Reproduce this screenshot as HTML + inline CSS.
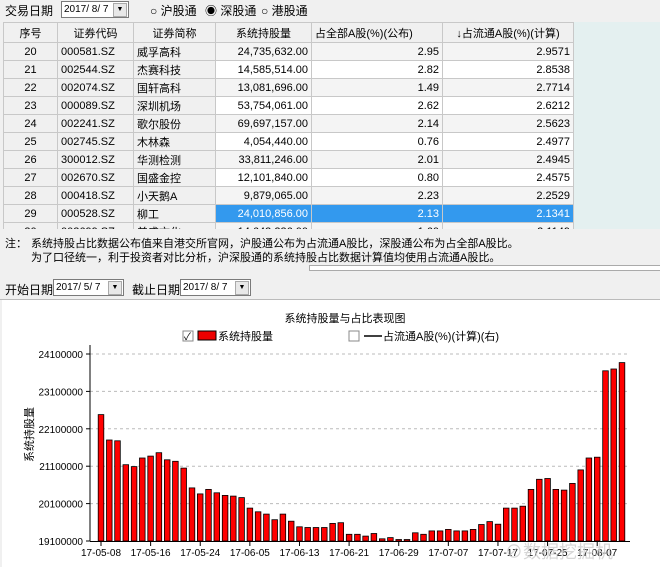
<!DOCTYPE html><html><head><meta charset="utf-8"><style>
body{margin:0;width:660px;height:567px;background:#f0f0f0;font-family:"Liberation Sans","Noto Sans CJK SC",sans-serif;font-size:11px;color:#000;position:relative;overflow:hidden}
.a{position:absolute;white-space:nowrap}
.dd{position:absolute;background:#fff;border:1px solid #7a7a7a;height:17px;font-size:10px;line-height:15px;padding-left:2px;box-sizing:border-box;overflow:hidden}
.dd b{position:absolute;right:1px;top:1px;width:12px;height:12px;background:#e8e8e8;border:1px solid #aaa;font-size:7px;line-height:12px;text-align:center;font-weight:normal}
table{position:absolute;left:3px;top:22px;border-collapse:collapse;table-layout:fixed}
td{height:17px;border:1px solid #c8c8c8;padding:0 3px;font-size:11px;overflow:hidden;white-space:nowrap}
td.c{text-align:center}td.r{text-align:right}
tr.h td{height:19px;text-align:center;background:#f0f0f0}
tr td:nth-child(-n+3){background:#f0f0f0}
tr.w td{background:#fff}tr.g td{background:#f4f4f4}
tr.w td:nth-child(-n+3),tr.g td:nth-child(-n+3){background:#f0f0f0}
tr.s td:nth-child(n+4){background:#3399ee;color:#fff}
</style></head><body>
<div class="a" style="left:5px;top:2px;font-size:12px">交易日期</div>
<div class="dd" style="left:61px;top:1px;width:68px">2017/ 8/ 7<b>▼</b></div>
<div class="a" style="left:150px;top:2px;font-size:12px">○ 沪股通</div>
<div class="a" style="left:205px;top:2px;font-size:12px">◉ 深股通</div>
<div class="a" style="left:261px;top:2px;font-size:12px">○ 港股通</div>
<div class="a" style="left:573px;top:22px;width:87px;height:207px;background:#e4f0f0"></div>
<div class="a" style="left:0;top:22px;width:660px;height:207px;overflow:hidden">
<table style="left:3px;top:0">
<colgroup><col style="width:54px"><col style="width:76px"><col style="width:82px"><col style="width:96px"><col style="width:131px"><col style="width:131px"></colgroup>
<tr class="h"><td>序号</td><td>证券代码</td><td>证券简称</td><td>系统持股量</td><td style="text-align:left">占全部A股(%)(公布)</td><td>↓占流通A股(%)(计算)</td></tr>
<tr class="g"><td class="c">20</td><td>000581.SZ</td><td>威孚高科</td><td class="r">24,735,632.00</td><td class="r">2.95</td><td class="r">2.9571</td></tr>
<tr class="w"><td class="c">21</td><td>002544.SZ</td><td>杰赛科技</td><td class="r">14,585,514.00</td><td class="r">2.82</td><td class="r">2.8538</td></tr>
<tr class="g"><td class="c">22</td><td>002074.SZ</td><td>国轩高科</td><td class="r">13,081,696.00</td><td class="r">1.49</td><td class="r">2.7714</td></tr>
<tr class="w"><td class="c">23</td><td>000089.SZ</td><td>深圳机场</td><td class="r">53,754,061.00</td><td class="r">2.62</td><td class="r">2.6212</td></tr>
<tr class="g"><td class="c">24</td><td>002241.SZ</td><td>歌尔股份</td><td class="r">69,697,157.00</td><td class="r">2.14</td><td class="r">2.5623</td></tr>
<tr class="w"><td class="c">25</td><td>002745.SZ</td><td>木林森</td><td class="r">4,054,440.00</td><td class="r">0.76</td><td class="r">2.4977</td></tr>
<tr class="g"><td class="c">26</td><td>300012.SZ</td><td>华测检测</td><td class="r">33,811,246.00</td><td class="r">2.01</td><td class="r">2.4945</td></tr>
<tr class="w"><td class="c">27</td><td>002670.SZ</td><td>国盛金控</td><td class="r">12,101,840.00</td><td class="r">0.80</td><td class="r">2.4575</td></tr>
<tr class="g"><td class="c">28</td><td>000418.SZ</td><td>小天鹅A</td><td class="r">9,879,065.00</td><td class="r">2.23</td><td class="r">2.2529</td></tr>
<tr class="s"><td class="c">29</td><td>000528.SZ</td><td>柳工</td><td class="r">24,010,856.00</td><td class="r">2.13</td><td class="r">2.1341</td></tr>
<tr class="g"><td class="c">30</td><td>002699.SZ</td><td>美盛文化</td><td class="r">14,643,236.00</td><td class="r">1.60</td><td class="r">2.1149</td></tr>
</table></div>
<div class="a" style="left:5px;top:235px">注：</div>
<div class="a" style="left:31px;top:235px">系统持股占比数据公布值来自港交所官网，沪股通公布为占流通A股比，深股通公布为占全部A股比。</div>
<div class="a" style="left:31px;top:249px">为了口径统一，利于投资者对比分析，沪深股通的系统持股占比数据计算值均使用占流通A股比。</div>
<div class="a" style="left:309px;top:265px;width:351px;height:4px;border:1px solid #aaa;border-right:none;background:#fff"></div>
<div class="a" style="left:5px;top:281px;font-size:12px">开始日期</div>
<div class="dd" style="left:53px;top:279px;width:71px">2017/ 5/ 7<b>▼</b></div>
<div class="a" style="left:132px;top:281px;font-size:12px">截止日期</div>
<div class="dd" style="left:180px;top:279px;width:71px">2017/ 8/ 7<b>▼</b></div>
<div class="a" style="left:0;top:299px;width:660px;height:1px;background:#bbb"></div>
<div class="a" style="left:2px;top:300px;width:658px;height:267px;background:#fff"></div>
<svg class="a" style="left:0;top:0" width="660" height="567" id="s"></svg>
<script>
var v=[22.48,21.80,21.78,21.14,21.09,21.32,21.37,21.46,21.27,21.23,21.05,20.52,20.36,20.48,20.39,20.32,20.30,20.26,19.98,19.88,19.82,19.67,19.82,19.63,19.48,19.46,19.46,19.46,19.57,19.59,19.28,19.28,19.23,19.30,19.16,19.19,19.14,19.14,19.32,19.28,19.37,19.37,19.41,19.37,19.37,19.41,19.54,19.62,19.55,19.98,19.98,20.03,20.48,20.75,20.77,20.48,20.46,20.64,21.0,21.32,21.34,23.65,23.70,23.87];
function Y(m){return 541-(m-19.1)*37.4}
var h='<text x="345" y="322" font-size="11" text-anchor="middle">系统持股量与占比表现图</text>';
h+='<rect x="183" y="331" width="10" height="10" fill="#fff" stroke="#888"/><text x="184" y="340" font-size="10">✓</text>';
h+='<rect x="198" y="331" width="18" height="9" fill="#e00" stroke="#000"/><text x="218" y="340" font-size="11">系统持股量</text>';
h+='<rect x="349" y="331" width="10" height="10" fill="#fff" stroke="#888"/><line x1="364" y1="336" x2="382" y2="336" stroke="#000" stroke-width="1.5"/><text x="383" y="340" font-size="11">占流通A股(%)(计算)(右)</text>';
for(var i=0;i<6;i++){var m=24.1-i,y=Y(m);h+='<text x="83" y="'+(y+4)+'" font-size="10" text-anchor="end">'+(m*1e6).toFixed(0)+'</text><line x1="86" y1="'+y+'" x2="90" y2="'+y+'" stroke="#000"/>';if(i<5)h+='<line x1="90" y1="'+y+'" x2="630" y2="'+y+'" stroke="#bbb" stroke-dasharray="3,3"/>';}
h+='<line x1="90" y1="345" x2="90" y2="541" stroke="#000"/><line x1="90" y1="541.5" x2="630" y2="541.5" stroke="#000"/>';
h+='<text transform="translate(33,462) rotate(-90)" font-size="11">系统持股量</text>';
for(i=0;i<v.length;i++){var x=101+i*8.27;h+='<rect x="'+(x-2.8).toFixed(1)+'" y="'+Y(v[i]).toFixed(1)+'" width="5.6" height="'+(541-Y(v[i])).toFixed(1)+'" fill="#f00" stroke="#000" stroke-width="0.8"/>';}
var d=['17-05-08','17-05-16','17-05-24','17-06-05','17-06-13','17-06-21','17-06-29','17-07-07','17-07-17','17-07-25','17-08-07'];
for(i=0;i<d.length;i++){var x=101+i*6*8.27;if(x>630)x=622;h+='<line x1="'+x+'" y1="541" x2="'+x+'" y2="546" stroke="#000"/><text x="'+x+'" y="556" font-size="10" text-anchor="middle">'+d[i]+'</text>';}
h+='<text x="505" y="558" font-size="18" fill="#ccc" opacity="0.8">⊘数据挖掘机</text>';
document.getElementById('s').innerHTML=h;
</script>
</body></html>
